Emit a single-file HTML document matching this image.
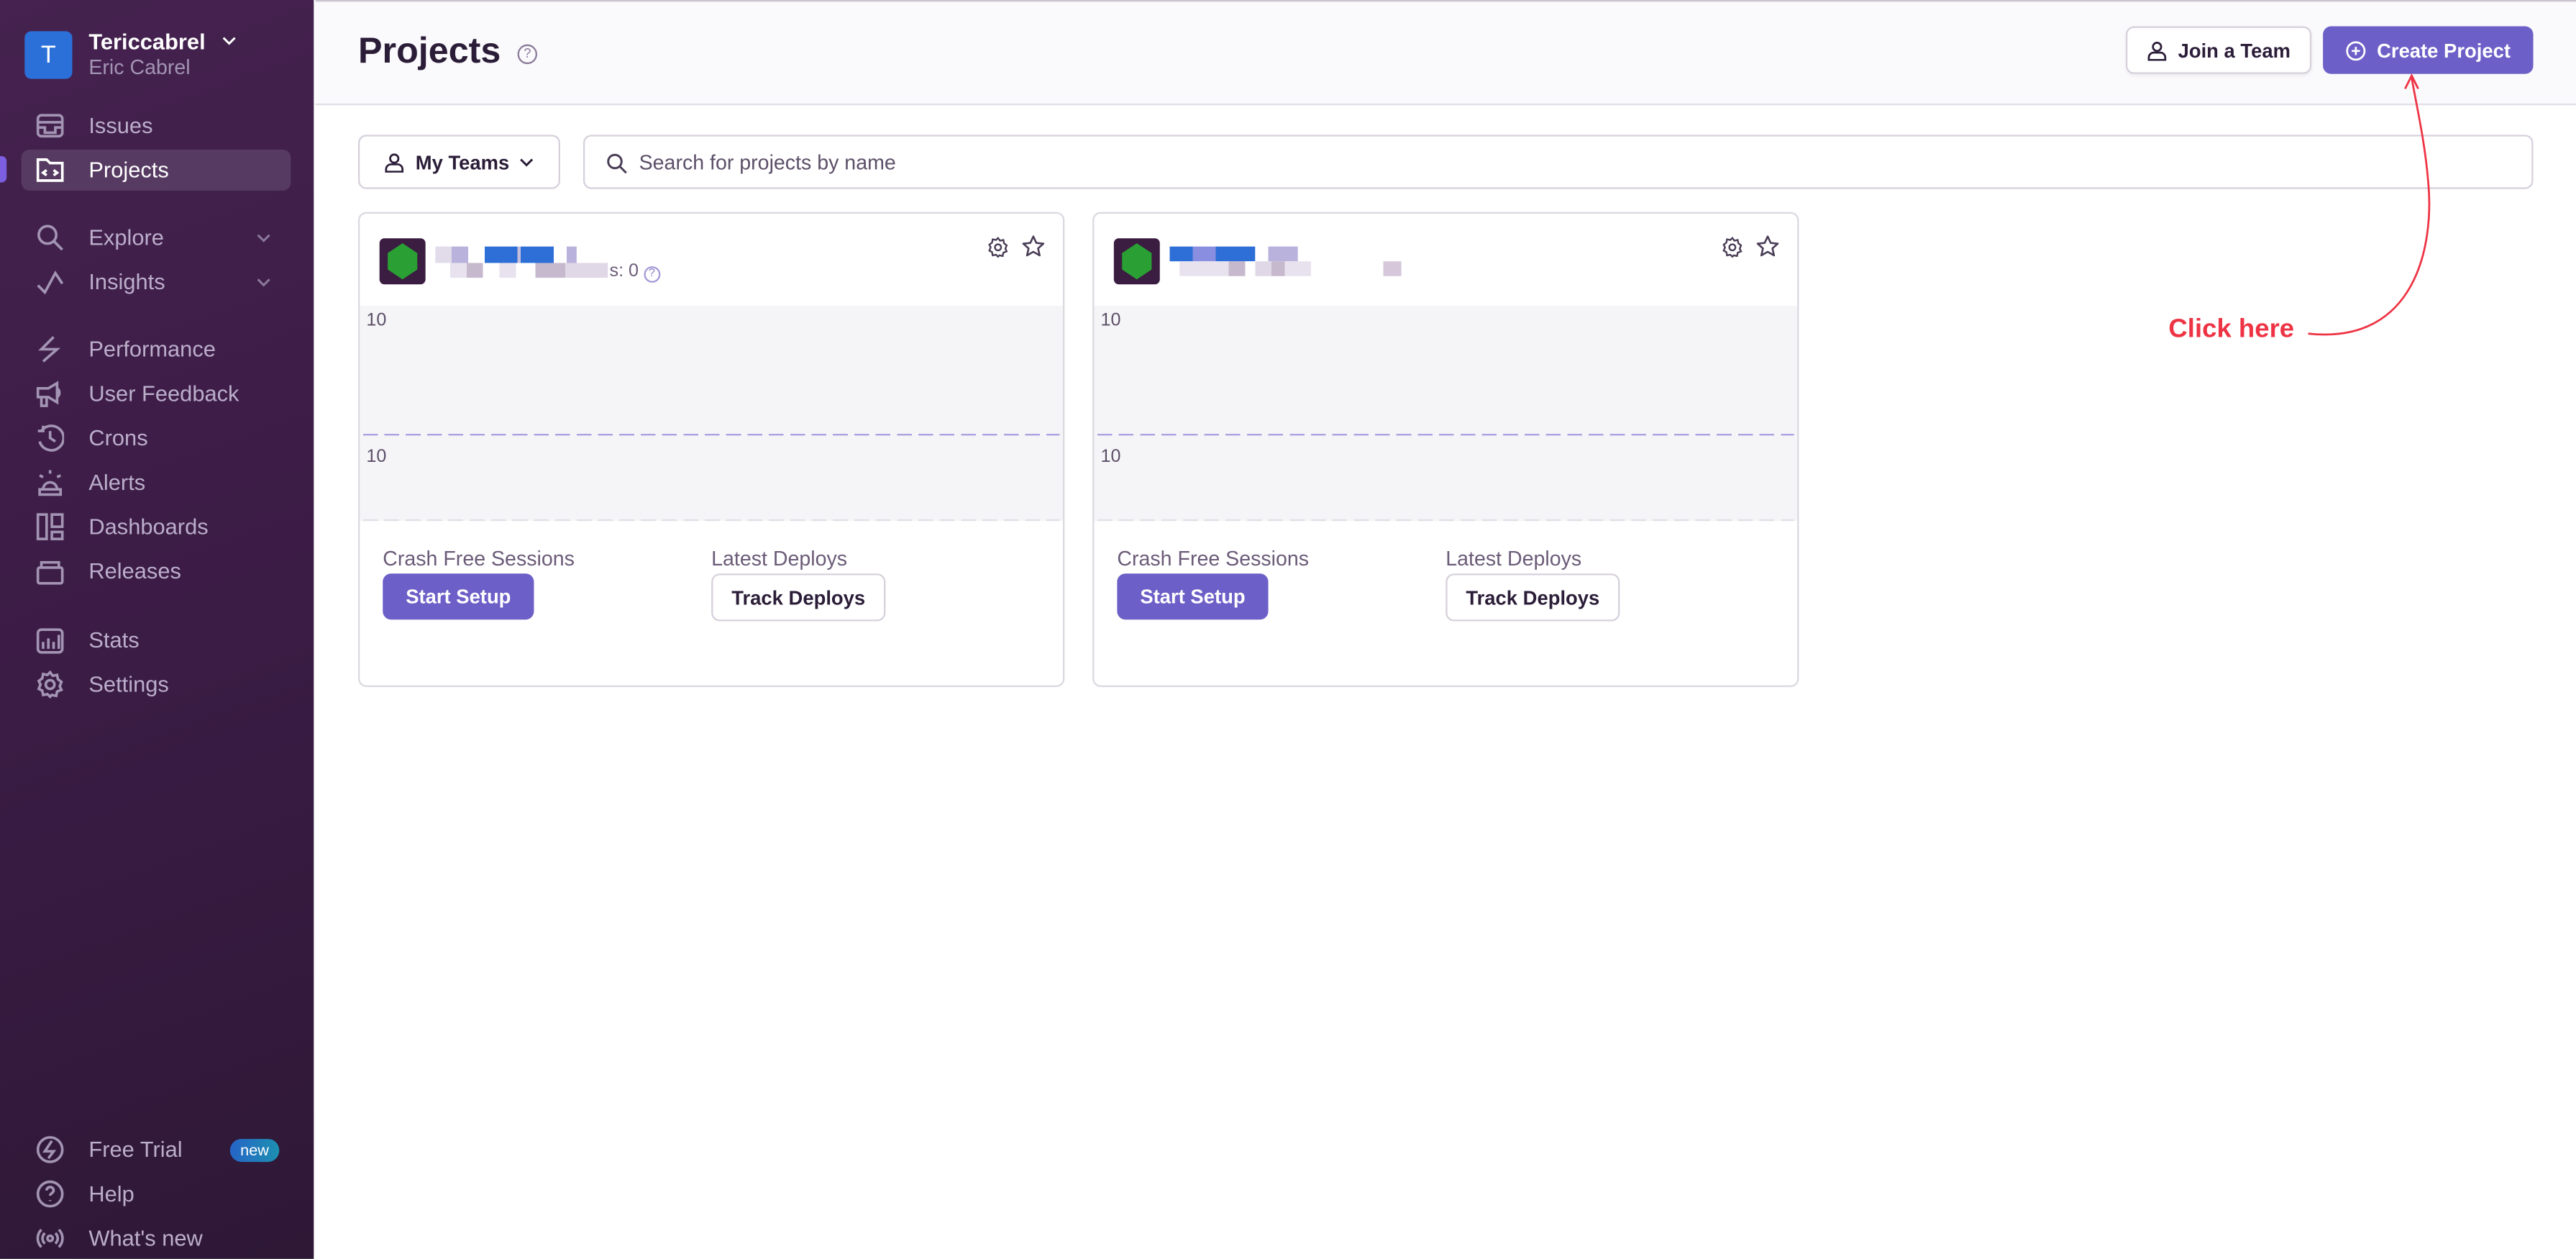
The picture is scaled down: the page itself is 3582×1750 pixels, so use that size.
<!DOCTYPE html>
<html><head><meta charset="utf-8"><style>
*{box-sizing:border-box;margin:0;padding:0}
html,body{width:3582px;height:1750px;overflow:hidden;background:#fff}
#root{position:absolute;left:0;top:0;width:1568px;height:766px;transform:scale(2.2844);transform-origin:0 0;font-family:"Liberation Sans",sans-serif;color:#2b2233}
.sb{position:absolute;left:0;top:0;width:191px;height:766px;background:linear-gradient(160deg,#45224f 0%,#3b1c45 50%,#2e1836 100%)}
.ni{position:absolute;left:22px;height:20px;display:flex;align-items:center;color:#bcaecb;font-size:13.5px}
.ni svg{width:17px;height:17px;margin-right:15px;stroke:#a394b3;fill:none;stroke-width:1.5}
.hdr{position:absolute;left:192px;top:0;width:1376px;height:64px;background:#faf9fb;border-bottom:1px solid #e2dee6;border-top:1px solid #c9c4cf}
.btn{position:absolute;border-radius:5px;font-size:12px;font-weight:bold;display:flex;align-items:center;justify-content:center}
.card{position:absolute;top:129px;width:430px;height:289px;border:1px solid #dcd8e0;border-radius:5px;background:#fff;overflow:hidden}
.chart{position:absolute;left:0;top:56px;width:100%;height:131px;background:#f5f5f7}
.lbl{position:absolute;font-size:12.5px;color:#6b5b78}
.dash{position:absolute;left:2px;right:2px;height:1px;background:repeating-linear-gradient(90deg,#a89fe0 0 9px,transparent 9px 13px)}
.dash2{position:absolute;left:2px;right:2px;height:1px;background:repeating-linear-gradient(90deg,#e2dee6 0 9px,transparent 9px 13px)}
.ch{fill:none;stroke:#8a7a9a;stroke-width:1.3}
</style></head><body><div id="root">
<div class="sb">
 <div style="position:absolute;left:15px;top:19px;width:29px;height:29px;border-radius:4px;background:#2b6fd8;color:#fff;font-size:15px;display:flex;align-items:center;justify-content:center">T</div>
 <div style="position:absolute;left:54px;top:18px;color:#fff;font-weight:bold;font-size:13.5px">Tericcabrel</div>
 <svg style="position:absolute;left:135px;top:22px" width="9" height="6" viewBox="0 0 9 6"><path d="M1 1l3.5 3.5L8 1" fill="none" stroke="#fff" stroke-width="1.3"/></svg>
 <div style="position:absolute;left:54px;top:34px;color:#a394b3;font-size:12.5px">Eric Cabrel</div>
 <div style="position:absolute;left:0;top:95px;width:4px;height:16px;background:#7c5fe0;border-radius:0 3px 3px 0"></div>
 <div style="position:absolute;left:13px;top:91px;width:164px;height:25px;background:#563a61;border-radius:5px"></div>
 <div class="ni" style="top:66px"><svg viewBox="0 0 16 16"><rect x="1" y="2" width="14" height="12" rx="2"/><path d="M1 6h14M1 9h4v3h6V9h4"/></svg>Issues</div>
 <div class="ni" style="top:93px;color:#fff"><svg viewBox="0 0 16 16" style="stroke:#fff"><path d="M1 2h5l2 2h7v10H1z"/><path d="M6 8l-2 1.5L6 11M10 8l2 1.5L10 11"/></svg>Projects</div>
 <div class="ni" style="top:134px"><svg viewBox="0 0 16 16"><circle cx="6.5" cy="6.5" r="5"/><path d="M10 10l5 5"/></svg>Explore</div>
 <div class="ni" style="top:161px"><svg viewBox="0 0 16 16"><path d="M1 10l4 4 6-11 4 6"/></svg>Insights</div>
 <svg style="position:absolute;left:156px;top:142px" width="9" height="6" viewBox="0 0 9 6"><path class="ch" d="M1 1l3.5 3.5L8 1"/></svg>
 <svg style="position:absolute;left:156px;top:169px" width="9" height="6" viewBox="0 0 9 6"><path class="ch" d="M1 1l3.5 3.5L8 1"/></svg>
 <div class="ni" style="top:202px"><svg viewBox="0 0 16 16"><path d="M10 1L3 8h9l-8 7"/></svg>Performance</div>
 <div class="ni" style="top:229px"><svg viewBox="0 0 16 16"><path d="M1 5h6l5-3v11l-5-3H1zM3 10v5h3v-5M12 5a3 3 0 010 5"/></svg>User Feedback</div>
 <div class="ni" style="top:256px"><svg viewBox="0 0 16 16"><path d="M2 10a7 7 0 101-6M1 4h3V1M8 4v4l3 2"/></svg>Crons</div>
 <div class="ni" style="top:283px"><svg viewBox="0 0 16 16"><path d="M2 15h12v-3H2zM4 12a4 4 0 018 0M8 1v2M2 4l2 1M14 4l-2 1"/></svg>Alerts</div>
 <div class="ni" style="top:310px"><svg viewBox="0 0 16 16"><rect x="1" y="1" width="5" height="14"/><rect x="9" y="1" width="6" height="7"/><rect x="9" y="11" width="6" height="4"/></svg>Dashboards</div>
 <div class="ni" style="top:337px"><svg viewBox="0 0 16 16"><rect x="1" y="6" width="14" height="9" rx="1"/><path d="M3 6V3h10v3"/></svg>Releases</div>
 <div class="ni" style="top:379px"><svg viewBox="0 0 16 16"><rect x="1" y="2" width="14" height="13" rx="2"/><path d="M4 13V9M7 13V7M10 13V9M13 13V5"/></svg>Stats</div>
 <div class="ni" style="top:406px"><svg viewBox="0 0 16 16"><circle cx="8" cy="8" r="2.5"/><path d="M8 1l1.5 2 2.5-.5.5 2.5 2 1.5-1 2.5 1 2-2.5 1-.5 2.5-2.5-.5L8 15l-1.5-1.5-2.5.5-.5-2.5-2-1 1-2.5-1-2 2-1.5.5-2.5 2.5.5z"/></svg>Settings</div>
 <div class="ni" style="top:689px"><svg viewBox="0 0 16 16"><circle cx="8" cy="8" r="7"/><path d="M9 3L5 9h5l-3 4"/></svg>Free Trial</div>
 <div style="position:absolute;left:140px;top:693px;width:30px;height:14px;border-radius:7px;background:linear-gradient(90deg,#2565c7,#1d8fb0);color:#fff;font-size:9.5px;display:flex;align-items:center;justify-content:center">new</div>
 <div class="ni" style="top:716px"><svg viewBox="0 0 16 16"><circle cx="8" cy="8" r="7"/><path d="M6 6a2 2 0 114 0c0 1.5-2 1.5-2 3M8 11.5v.5"/></svg>Help</div>
 <div class="ni" style="top:743px"><svg viewBox="0 0 16 16"><circle cx="8" cy="8" r="1.5"/><path d="M5 5a4 4 0 000 6M11 5a4 4 0 010 6M3 3a7 7 0 000 10M13 3a7 7 0 010 10"/></svg>What's new</div>
</div>
<div class="hdr">
 <div style="position:absolute;left:26px;top:17px;font-size:22px;font-weight:bold;color:#2b1d38">Projects</div>
 <div style="position:absolute;left:123px;top:26px;width:12px;height:12px;border:1px solid #8a7a9a;border-radius:50%;font-size:8px;color:#8a7a9a;text-align:center;line-height:10px">?</div>
 <div class="btn" style="left:1102px;top:15px;width:113px;height:29px;border:1px solid #d6d0dc;background:#fff;color:#2b1d38;box-shadow:0 1px 2px rgba(0,0,0,.06)"><svg width="12" height="12" viewBox="0 0 12 12" style="margin-right:7px" fill="none" stroke="#2b1d38" stroke-width="1.2"><circle cx="6" cy="3.5" r="2.5"/><path d="M1 11.5V10a3 3 0 013-3h4a3 3 0 013 3v1.5z"/></svg>Join a Team</div>
 <div class="btn" style="left:1222px;top:15px;width:128px;height:29px;background:#6c5fc7;color:#fff"><svg width="12" height="12" viewBox="0 0 12 12" style="margin-right:7px" fill="none" stroke="#fff" stroke-width="1.2"><circle cx="6" cy="6" r="5.3"/><path d="M6 3.5v5M3.5 6h5"/></svg>Create Project</div>
</div>
<div class="btn" style="left:218px;top:82px;width:123px;height:33px;border:1px solid #d6d0dc;background:#fff;color:#2b1d38"><svg width="12" height="12" viewBox="0 0 12 12" style="margin-right:7px" fill="none" stroke="#2b1d38" stroke-width="1.2"><circle cx="6" cy="3.5" r="2.5"/><path d="M1 11.5V10a3 3 0 013-3h4a3 3 0 013 3v1.5z"/></svg>My Teams<svg width="9" height="6" viewBox="0 0 9 6" style="margin-left:6px"><path d="M1 1l3.5 3.5L8 1" fill="none" stroke="#2b1d38" stroke-width="1.3"/></svg></div>
<div style="position:absolute;left:355px;top:82px;width:1187px;height:33px;border:1px solid #d6d0dc;border-radius:5px;background:#fff">
 <svg style="position:absolute;left:13px;top:10px" width="13" height="13" viewBox="0 0 16 16" fill="none" stroke="#4a3d56" stroke-width="1.6"><circle cx="6.5" cy="6.5" r="5"/><path d="M10 10l5 5"/></svg>
 <div style="position:absolute;left:33px;top:9px;font-size:12.5px;color:#5c4f68">Search for projects by name</div>
</div>
<div class="card" style="left:218px">
 <div style="position:absolute;left:12px;top:15px;width:28px;height:28px;border-radius:3px;background:#3a1d40"><svg width="28" height="28" viewBox="0 0 28 28"><path d="M14 3l9 6v10l-9 6-9-6V9z" fill="#2a9f34"/></svg></div>
 <div style="position:absolute;left:46px;top:20px;width:86px;height:10px;background:linear-gradient(90deg,#e2dcea 0 10px,#b8b2dc 10px 20px,#fff 20px 30px,#2d6fd6 30px 50px,#c5bedc 50px 52px,#2d6fd6 52px 72px,#fff 72px 80px,#b8b2dc 80px)"></div>
 <div style="position:absolute;left:55px;top:30px;width:96px;height:9px;background:linear-gradient(90deg,#e8e2ee 0 10px,#c7b9cd 10px 20px,#fff 20px 30px,#e8e2ee 30px 40px,#fff 40px 52px,#c7b9cd 52px 70px,#e0d8e6 70px)"></div>
 <div style="position:absolute;left:152px;top:29px;font-size:11px;color:#6b5b78">s: 0 <span style="display:inline-block;width:10px;height:10px;border:1px solid #a39ad8;border-radius:50%;font-size:7px;text-align:center;line-height:8px;color:#8a80c8">?</span></div>
 <svg style="position:absolute;left:382px;top:14px" width="13" height="13" viewBox="0 0 16 16" fill="none" stroke="#4a3d56" stroke-width="1.3"><circle cx="8" cy="8" r="2.3"/><path d="M8 1l1.5 2 2.5-.5.5 2.5 2 1.5-1 2.5 1 2-2.5 1-.5 2.5-2.5-.5L8 15l-1.5-1.5-2.5.5-.5-2.5-2-1 1-2.5-1-2 2-1.5.5-2.5 2.5.5z"/></svg>
 <svg style="position:absolute;left:403px;top:13px" width="14" height="14" viewBox="0 0 16 16" fill="none" stroke="#4a3d56" stroke-width="1.3" stroke-linejoin="round"><path d="M8 1l2.1 4.5 4.9.5-3.7 3.3 1.1 4.9L8 11.7 3.6 14.2l1.1-4.9L1 6l4.9-.5z"/></svg>
 <div class="chart"><div style="position:absolute;left:4px;top:3px;font-size:11px;color:#5c4f68">10</div><div style="position:absolute;left:4px;top:86px;font-size:11px;color:#5c4f68">10</div><div class="dash" style="top:78px"></div><div class="dash2" style="bottom:0"></div></div>
 <div class="lbl" style="left:14px;top:203px">Crash Free Sessions</div>
 <div class="lbl" style="left:214px;top:203px">Latest Deploys</div>
 <div class="btn" style="left:14px;top:219px;width:92px;height:28px;background:#6c5fc7;color:#fff">Start Setup</div>
 <div class="btn" style="left:214px;top:219px;width:106px;height:29px;border:1px solid #d6d0dc;background:#fff;color:#2b1d38">Track Deploys</div>
</div>
<div class="card" style="left:665px">
 <div style="position:absolute;left:12px;top:15px;width:28px;height:28px;border-radius:3px;background:#3a1d40"><svg width="28" height="28" viewBox="0 0 28 28"><path d="M14 3l9 6v10l-9 6-9-6V9z" fill="#2a9f34"/></svg></div>
 <div style="position:absolute;left:46px;top:20px;width:52px;height:9px;background:linear-gradient(90deg,#2d6fd6 0 14px,#8a8ee0 14px 28px,#2d6fd6 28px)"></div>
 <div style="position:absolute;left:106px;top:20px;width:18px;height:9px;background:#b8b2dc"></div>
 <div style="position:absolute;left:52px;top:29px;width:135px;height:9px;background:linear-gradient(90deg,#e8e2ee 0 30px,#c7b9cd 30px 40px,#fff 40px 46px,#e0d8e6 46px 56px,#c7b9cd 56px 64px,#e8e2ee 64px 80px,#fff 80px 124px,#d6c8da 124px)"></div>
 <svg style="position:absolute;left:382px;top:14px" width="13" height="13" viewBox="0 0 16 16" fill="none" stroke="#4a3d56" stroke-width="1.3"><circle cx="8" cy="8" r="2.3"/><path d="M8 1l1.5 2 2.5-.5.5 2.5 2 1.5-1 2.5 1 2-2.5 1-.5 2.5-2.5-.5L8 15l-1.5-1.5-2.5.5-.5-2.5-2-1 1-2.5-1-2 2-1.5.5-2.5 2.5.5z"/></svg>
 <svg style="position:absolute;left:403px;top:13px" width="14" height="14" viewBox="0 0 16 16" fill="none" stroke="#4a3d56" stroke-width="1.3" stroke-linejoin="round"><path d="M8 1l2.1 4.5 4.9.5-3.7 3.3 1.1 4.9L8 11.7 3.6 14.2l1.1-4.9L1 6l4.9-.5z"/></svg>
 <div class="chart"><div style="position:absolute;left:4px;top:3px;font-size:11px;color:#5c4f68">10</div><div style="position:absolute;left:4px;top:86px;font-size:11px;color:#5c4f68">10</div><div class="dash" style="top:78px"></div><div class="dash2" style="bottom:0"></div></div>
 <div class="lbl" style="left:14px;top:203px">Crash Free Sessions</div>
 <div class="lbl" style="left:214px;top:203px">Latest Deploys</div>
 <div class="btn" style="left:14px;top:219px;width:92px;height:28px;background:#6c5fc7;color:#fff">Start Setup</div>
 <div class="btn" style="left:214px;top:219px;width:106px;height:29px;border:1px solid #d6d0dc;background:#fff;color:#2b1d38">Track Deploys</div>
</div>
<div style="position:absolute;left:1320px;top:192px;font-size:16px;font-weight:bold;color:#ee3344">Click here</div>
<svg style="position:absolute;left:0;top:0" width="1568" height="766" fill="none" stroke="#ee3344" stroke-width="1.2"><path d="M1405 203C1470 210 1482 150 1478 110C1476 85 1470 60 1468 47"/><path d="M1464 54l4-8 4 8"/></svg>
</div></body></html>
